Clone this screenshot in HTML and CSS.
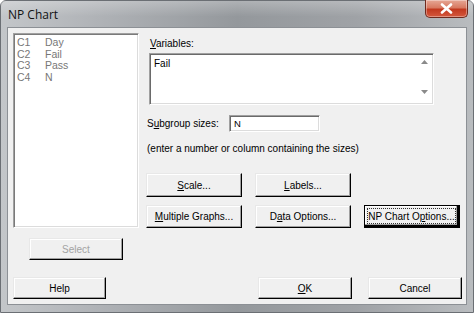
FILE: index.html
```html
<!DOCTYPE html>
<html>
<head>
<meta charset="utf-8">
<link rel="stylesheet" href="styles.css">
</head>
<body>
<div class="window">
  <div class="titlebar">
    <span class="title">NP Chart</span>
    <div class="close"><svg width="13" height="11" viewBox="0 0 13 11"><path d="M2 1.5 L11 9.5 M11 1.5 L2 9.5" stroke="#fff" stroke-width="2.6" stroke-linecap="round"/></svg></div>
  </div>
  <div class="client">
    <div class="main">
      <div class="leftcol">
        <div class="listbox">
          <div class="item"><span class="col">C1</span><span>Day</span></div>
          <div class="item"><span class="col">C2</span><span>Fail</span></div>
          <div class="item"><span class="col">C3</span><span>Pass</span></div>
          <div class="item"><span class="col">C4</span><span>N</span></div>
        </div>
        <div class="btn disabled select">Select</div>
      </div>
      <div class="rightcol">
        <div class="label varlabel"><u>V</u>ariables:</div>
        <div class="textarea">
          <span class="val">Fail</span>
          <div class="scroll">
            <svg width="7" height="4" viewBox="0 0 7 4"><path d="M0 4 L3.5 0 L7 4Z" fill="#8a8a8a"/></svg>
            <svg width="7" height="4" viewBox="0 0 7 4"><path d="M0 0 L3.5 4 L7 0Z" fill="#8a8a8a"/></svg>
          </div>
        </div>
        <div class="subrow">
          <span class="label sublabel">S<u>u</u>bgroup sizes:</span>
          <div class="input">N</div>
        </div>
        <div class="label hint">(enter a number or column containing the sizes)</div>
        <div class="btnrow row1">
          <div class="btn"><u>S</u>cale...</div>
          <div class="btn"><u>L</u>abels...</div>
        </div>
        <div class="btnrow row2">
          <div class="btn"><u>M</u>ultiple Graphs...</div>
          <div class="btn">D<u>a</u>ta Options...</div>
          <div class="btn default"><span class="focus">NP Chart O<u>p</u>tions...</span></div>
        </div>
      </div>
    </div>
    <div class="bottom">
      <div class="btn help">Help</div>
      <div class="btn ok"><u>O</u>K</div>
      <div class="btn cancel">Cancel</div>
    </div>
  </div>
</div>
</body>
</html>
```

FILE: styles.css
```css
html, body {
  margin: 0;
  padding: 0;
}
body {
  width: 474px;
  height: 313px;
  overflow: hidden;
  background: #ffffff;
  font-family: "Liberation Sans", Arial, sans-serif;
  font-size: 10px;
  color: #000;
}
.window {
  position: relative;
  width: 474px;
  height: 313px;
  box-sizing: border-box;
  border: 1px solid #6b6f74;
  border-radius: 6px 6px 0 0;
  background: linear-gradient(to right, #c3c6c9 0%, #b0b3b7 20%, #94989c 50%, #9fa2a6 75%, #b9bcbf 100%);
  padding: 0 6px 7px 6px;
  display: flex;
  flex-direction: column;
}
.titlebar {
  height: 26px;
  display: flex;
  align-items: center;
  background: linear-gradient(to bottom, rgba(255,255,255,0.25), rgba(255,255,255,0) 60%);
  margin: 0 -6px;
  padding: 0 7px;
}
.title {
  font-family: "Open Sans", "Noto Sans", sans-serif;
  font-size: 12px;
  color: #111;
}
.close {
  position: absolute;
  top: -1px;
  right: 5px;
  width: 43px;
  height: 18px;
  box-sizing: border-box;
  border: 1px solid #6f2a1e;
  border-top: none;
  border-radius: 0 0 5px 5px;
  background: linear-gradient(to bottom, #e6a795 0%, #d87a62 45%, #c2391f 55%, #d4583d 100%);
  display: flex;
  align-items: center;
  justify-content: center;
  box-shadow: inset 0 0 0 1px rgba(255,255,255,0.35);
}
.client {
  flex: 1;
  background: #f0f0f0;
  border: 1px solid #8c9095;
  padding: 5px 4px 0 5px;
  display: flex;
  flex-direction: column;
}
.main {
  display: flex;
}
.leftcol {
  width: 126px;
  display: flex;
  flex-direction: column;
}
.listbox {
  height: 195px;
  box-sizing: border-box;
  background: #fff;
  border: 1px solid;
  border-color: #a0a0a0 #ffffff #ffffff #a0a0a0;
  box-shadow: inset 1px 1px #7a7a7a, inset -1px -1px #dcdcdc;
  padding: 3px 0 0 3px;
  font-size: 10.5px;
}
.item {
  display: flex;
  color: #777;
  height: 11.5px;
  line-height: 11.5px;
}
.item .col {
  width: 28px;
}
.btn {
  box-sizing: border-box;
  background: #f0f0f0;
  border: 1px solid;
  border-color: #e8e8e8 #000 #000 #e8e8e8;
  box-shadow: inset -1px -1px #a0a0a0, inset 1px 1px #fff;
  display: flex;
  align-items: center;
  justify-content: center;
  width: 96px;
  height: 23px;
  color: #000;
  white-space: nowrap;
}
.btn.disabled {
  color: #a3a3a3;
}
.select {
  margin-top: 10px;
  margin-left: 16px;
  width: 94px;
  height: 22px;
}
.rightcol {
  margin-left: 7px;
  display: flex;
  flex-direction: column;
}
.label {
  line-height: 13px;
  white-space: nowrap;
}
.varlabel {
  margin-top: 4px;
  padding-left: 4px;
}
.textarea {
  margin-top: 3px;
  margin-left: 3px;
  width: 285px;
  height: 52px;
  box-sizing: border-box;
  background: #fff;
  border: 1px solid;
  border-color: #a0a0a0 #ffffff #ffffff #a0a0a0;
  box-shadow: inset 1px 1px #6a6a6a, inset -1px -1px #dcdcdc;
  display: flex;
  justify-content: space-between;
  padding: 4px 0 0 4px;
}
.scroll {
  width: 17px;
  display: flex;
  flex-direction: column;
  align-items: center;
  justify-content: space-between;
  padding: 5px 0 10px;
  box-sizing: border-box;
  height: 49px;
  margin-top: -3px;
}
.subrow {
  margin-top: 10px;
  display: flex;
  align-items: center;
  height: 17px;
}
.sublabel {
  margin-left: 1px;
  width: 82px;
}
.input {
  width: 91px;
  height: 17px;
  box-sizing: border-box;
  background: #fff;
  border: 1px solid;
  border-color: #a0a0a0 #ffffff #ffffff #a0a0a0;
  box-shadow: inset 1px 1px #6a6a6a, inset -1px -1px #dcdcdc;
  padding: 2px 0 0 4px;
  line-height: 12px;
  font-size: 9.5px;
}
.hint {
  margin-top: 10px;
  margin-left: 1px;
}
.btnrow {
  display: flex;
  gap: 13px;
}
.row1 {
  margin-top: 18px;
}
.row1 .btn {
  height: 24px;
}
.row2 {
  margin-top: 8px;
}
.row2 .btn {
  height: 23px;
}
.btn.default {
  border: 1px solid #000;
  box-shadow: inset -2px -2px #000, inset -3px -3px #a0a0a0, inset 1px 1px #fff;
  padding: 2px 3px 3px 2px;
}
.focus {
  flex: 1;
  align-self: stretch;
  border: 1px dotted #333;
  display: flex;
  align-items: center;
  justify-content: center;
}
.bottom {
  margin-top: 17px;
  display: flex;
}
.help {
  width: 93px;
  height: 22px;
}
.ok {
  margin-left: 152px;
  width: 94px;
  height: 22px;
}
.cancel {
  margin-left: 16px;
  width: 94px;
  height: 22px;
}
```
